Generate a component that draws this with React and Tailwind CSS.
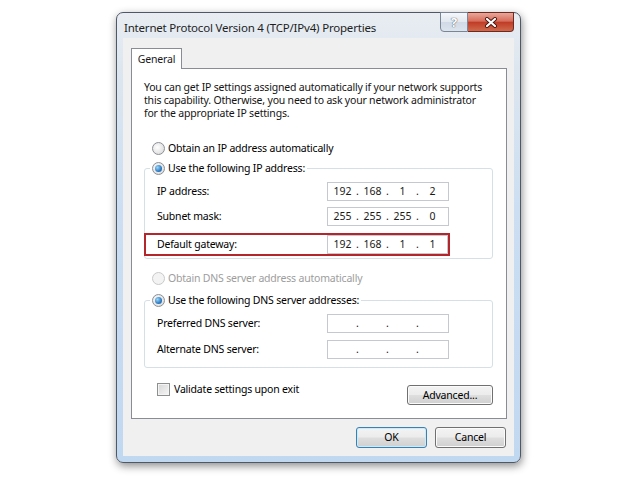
import React from 'react';

function Radio({ checked, disabled }) {
  return (
    <span
      className={`flex items-center justify-center w-[13px] h-[13px] shrink-0 rounded-full border ${
        disabled
          ? 'border-[#c9c9c9] bg-[#f3f3f3]'
          : 'border-[#8c8f94] bg-[radial-gradient(circle_at_40%_40%,#ffffff,#d4d4d4)]'
      }`}
    >
      {checked && (
        <span className="w-[7px] h-[7px] rounded-full bg-[radial-gradient(circle_at_35%_35%,#9ad8f8,#2f7bc4_60%,#164f8c)]" />
      )}
    </span>
  );
}

function Checkbox() {
  return (
    <span className="w-[13px] h-[13px] shrink-0 border border-[#8e8f8f] bg-[linear-gradient(135deg,#d6d6d6,#f7f7f7)] shadow-[inset_0_0_0_1px_#f4f4f4]" />
  );
}

function IpField({ parts = ['', '', '', ''], width = 'w-[122px]' }) {
  return (
    <div className={`flex items-center h-[19px] ${width} border border-[#c5c9cf] bg-white pl-[1px] text-[#1a1a1a] tracking-normal`}>
      {parts.map((p, i) => (
        <React.Fragment key={i}>
          <span className="w-[27px] text-center">{p}</span>
          {i < 3 && <span className="w-[3px] text-center">.</span>}
        </React.Fragment>
      ))}
    </div>
  );
}

function Button({ children, primary, className = '' }) {
  return (
    <button
      className={`h-[20px] rounded-[3px] border text-[10.5px] leading-none text-black bg-[linear-gradient(#f3f3f3_0%,#ececec_48%,#dedede_52%,#d0d0d0_100%)] ${
        primary
          ? 'border-[#3c7fb1] shadow-[inset_0_0_0_1px_#c8ecfb]'
          : 'border-[#707070] shadow-[inset_0_0_0_1px_#fbfbfb]'
      } ${className}`}
    >
      {children}
    </button>
  );
}

export default function App() {
  return (
    <div className="w-[638px] h-[478px] bg-white pt-[12px] pl-[116px] text-[10.5px] leading-[13px] tracking-[-0.2px] text-black font-['Noto_Sans','Open_Sans',sans-serif]">
      <div className="flex flex-col w-[405px] h-[451px] rounded-[7px] border border-[#4e5866] shadow-[1px_3px_9px_rgba(0,0,0,0.45)] bg-[linear-gradient(#e9edf2_0%,#dde6ef_12%,#cbdef2_45%,#c1d8f1_100%)]">
        {/* title bar */}
        <div className="flex justify-between h-[25px] pl-[7px] pr-[6px]">
          <div className="pt-[7px] text-[11.5px] leading-[15px] text-[#1e1e1e] whitespace-nowrap">
            Internet Protocol Version 4 (TCP/IPv4) Properties
          </div>
          <div className="flex h-[20px] -mt-[1px]">
            <div className="flex items-center justify-center w-[28px] h-full border border-[#7a8596] rounded-bl-[4px] bg-[linear-gradient(#f5f7fa,#e2e8ef_50%,#d0d9e5_51%,#dce4ed)] text-[13px] font-bold text-white [text-shadow:0_0_1px_#4d5664,0_0_1px_#4d5664]">
              ?
            </div>
            <div className="flex items-center justify-center w-[46px] h-full border border-l-0 border-[#6b2a22] rounded-br-[4px] bg-[linear-gradient(#e9a79a,#d76d5b_45%,#c13c26_52%,#cf6a4c)]">
              <svg width="14" height="11" viewBox="0 0 14 11">
                <path d="M3 2 L11 9 M11 2 L3 9" stroke="#47150f" strokeWidth="4" strokeLinecap="round" />
                <path d="M3 2 L11 9 M11 2 L3 9" stroke="#ffffff" strokeWidth="2.2" strokeLinecap="round" />
              </svg>
            </div>
          </div>
        </div>

        {/* client area */}
        <div className="flex flex-col w-[391px] h-[418px] ml-[6px] bg-[#f0f0f0] pt-[10px] pl-[8px] pr-[7px]">
          <div className="flex">
            <div className="relative z-10 -mb-[1px] flex items-center justify-center w-[51px] h-[21px] border border-b-0 border-[#898c95] bg-white text-[#1a1a1a]">
              General
            </div>
          </div>
          <div className="flex flex-col w-[376px] h-[351px] border border-[#898c95] bg-white pt-[12px] pl-[12px] pr-[13px]">
            <p className="whitespace-nowrap text-[#141414]">
              You can get IP settings assigned automatically if your network supports
              <br />
              this capability. Otherwise, you need to ask your network administrator
              <br />
              for the appropriate IP settings.
            </p>

            <div className="flex items-center gap-[3px] h-[16px] mt-[20px] ml-[8px]">
              <Radio />
              <span>Obtain an IP address automatically</span>
            </div>

            <fieldset className="mt-[4px] pl-[5px] border border-[#d5dfe5] rounded-[3px]">
              <legend className="px-[2px]">
                <div className="flex items-center gap-[3px] h-[16px]">
                  <Radio checked />
                  <span>Use the following IP address:</span>
                </div>
              </legend>
              <div className="flex flex-col pt-[6px] pb-[2px]">
                <div className="flex items-center h-[19px] pl-[7px]">
                  <span className="w-[170px]">IP address:</span>
                  <IpField parts={['192', '168', '1', '2']} />
                </div>
                <div className="flex items-center h-[19px] mt-[6px] pl-[7px]">
                  <span className="w-[170px]">Subnet mask:</span>
                  <IpField parts={['255', '255', '255', '0']} />
                </div>
                <div className="flex items-center h-[23px] w-[306px] mt-[7px] -ml-[6px] pl-[11px] border-2 border-[#b4262c]">
                  <span className="w-[170px]">Default gateway:</span>
                  <IpField parts={['192', '168', '1', '1']} width="w-[121px]" />
                </div>
              </div>
            </fieldset>

            <div className="flex items-center gap-[3px] h-[16px] mt-[11px] ml-[8px] text-[#9d9d9d]">
              <Radio disabled />
              <span>Obtain DNS server address automatically</span>
            </div>

            <fieldset className="mt-[6px] pl-[5px] border border-[#d5dfe5] rounded-[3px]">
              <legend className="px-[2px]">
                <div className="flex items-center gap-[3px] h-[16px]">
                  <Radio checked />
                  <span>Use the following DNS server addresses:</span>
                </div>
              </legend>
              <div className="flex flex-col pt-[6px] pb-[8px]">
                <div className="flex items-center h-[19px] pl-[7px]">
                  <span className="w-[170px]">Preferred DNS server:</span>
                  <IpField />
                </div>
                <div className="flex items-center h-[19px] mt-[7px] pl-[7px]">
                  <span className="w-[170px]">Alternate DNS server:</span>
                  <IpField />
                </div>
              </div>
            </fieldset>

            <div className="flex justify-between items-start mt-[13px]">
              <div className="flex items-center gap-[4px] h-[16px] ml-[13px]">
                <Checkbox />
                <span>Validate settings upon exit</span>
              </div>
              <Button className="w-[86px] mt-[4px]">Advanced...</Button>
            </div>
          </div>

          <div className="flex justify-end gap-[8px] mt-[8px] pr-[1px]">
            <Button primary className="w-[71px] h-[21px]">OK</Button>
            <Button className="w-[71px] h-[21px]">Cancel</Button>
          </div>
        </div>
      </div>
    </div>
  );
}
